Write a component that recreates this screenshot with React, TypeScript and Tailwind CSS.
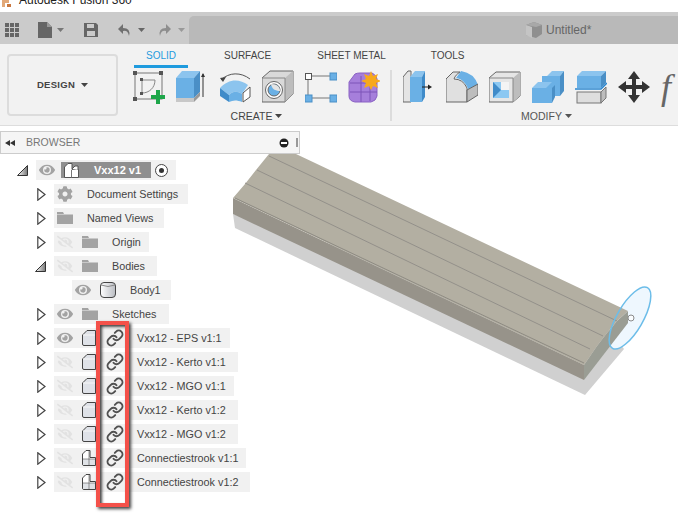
import React from 'react';
import { FaCog, FaEye, FaEyeSlash } from 'react-icons/fa';
import { Link } from 'lucide-react';

const Caret = ({ className = '' }: { className?: string }) => (
  <svg width="7" height="4" viewBox="0 0 7 4" className={className}>
    <path d="M0 0h7L3.5 4z" fill="currentColor" />
  </svg>
);

const Box = ({ children, w = 32 }: { children: React.ReactNode; w?: number }) => (
  <svg width={w} height="34" viewBox={`0 0 ${w} 34`} className="flex-none">
    {children}
  </svg>
);

const SketchIcon = () => (
  <Box>
    <rect x="2" y="3" width="27" height="26" fill="none" stroke="#777" />
    <rect x="0" y="1" width="4" height="4" fill="#555" />
    <rect x="26" y="1" width="4" height="4" fill="#555" />
    <rect x="0" y="27" width="4" height="4" fill="#555" />
    <path d="M9 10v13M9 23c7 0 13-5 13-13M9 10h13" fill="none" stroke="#888" />
    <rect x="7" y="8" width="3" height="3" fill="#555" />
    <rect x="7" y="22" width="3" height="3" fill="#555" />
    <path d="M23 20h4v5h5v4h-5v5h-4v-5h-5v-4h5z" fill="#1ea64a" />
  </Box>
);

const ExtrudeIcon = () => (
  <Box>
    <path d="M0 8l6-7h18l-6 7z" fill="#8cc4ee" />
    <rect x="0" y="8" width="18" height="20" fill="#6ab0e5" />
    <path d="M18 8l6-7v21l-6 6z" fill="#4a8fc6" />
    <path d="M0 28h18v4H0z" fill="#c8c8c8" />
    <path d="M18 28l6-6v4l-6 6z" fill="#999" />
    <path d="M27 4v23" stroke="#333" />
    <path d="M25 7l2-4 2 4z" fill="#333" />
  </Box>
);

const RevolveIcon = () => (
  <Box>
    <path d="M2 10C10 2 22 2 31 9" fill="none" stroke="#555" />
    <path d="M1 8l6-1-3 5z" fill="#444" />
    <path d="M1 18c8-9 19-10 28-3l-6 9c-5-3-9-3-13 1z" fill="#8cc4ee" />
    <path d="M1 18l9 7v7l-9-6z" fill="#3f8bc9" />
    <path d="M10 25c4-4 8-4 13-1v8c-5-2-9-2-13 0z" fill="#6ab0e5" />
    <path d="M24 23l7-6v10l-7 5z" fill="#fff" stroke="#555" />
  </Box>
);

const HoleIcon = () => (
  <Box>
    <path d="M0 8l8-7h23v23l-8 8H0z" fill="#d9d9d9" stroke="#666" />
    <path d="M23 8l8-7v23l-8 8z" fill="#bdbdbd" />
    <path d="M0 8h23v24" fill="none" stroke="#888" />
    <circle cx="12" cy="20" r="8.5" fill="#fff" stroke="#666" />
    <circle cx="12" cy="20" r="6" fill="#6ab0e5" stroke="#666" />
    <path d="M9 14c1 5 4 7 9 7 0-4-3-7-9-7z" fill="#e4e4e4" />
  </Box>
);

const ConstraintIcon = () => (
  <Box>
    <path d="M5 6h20M3 9v16M6 28h20" stroke="#777" />
    <rect x="0.5" y="3.5" width="6" height="6" fill="#fff" stroke="#555" />
    <rect x="25" y="3" width="7" height="7" fill="#6ab0e5" stroke="#4a8fc6" />
    <rect x="0" y="25" width="7" height="7" fill="#6ab0e5" stroke="#4a8fc6" />
    <rect x="25" y="25" width="7" height="7" fill="#6ab0e5" stroke="#4a8fc6" />
  </Box>
);

const FormIcon = () => (
  <Box>
    <path d="M1 12l6-8q2-1 5-1h12q6 3 5 9v14q-1 5-6 6H7q-6-1-6-6z" fill="#a67fdb" stroke="#8a62c4" />
    <path d="M2 13h27M2 22h27M13 6v26M22 5v26" stroke="#7c55b8" fill="none" />
    <path d="M23 1l2 5 5-2-2 5 5 2-5 2 2 5-5-2-2 4-2-4-5 2 2-5-5-2 5-2-2-5 5 2z" fill="#f7a81b" />
  </Box>
);

const PressPullIcon = () => (
  <Box>
    <path d="M0 7l5-6h3v31H0z" fill="#e4e4e4" stroke="#666" />
    <path d="M7 7l5-6h10l-3 6z" fill="#8cc4ee" />
    <rect x="7" y="7" width="12" height="25" fill="#6ab0e5" />
    <path d="M19 7l3-6v26l-3 5z" fill="#3f8bc9" />
    <path d="M19 17h8" stroke="#222" />
    <path d="M25 14.500l4 2.500-4 2.500z" fill="#222" />
  </Box>
);

const FilletIcon = () => (
  <Box>
    <path d="M0 9l7-7h7c-3 2-5 4-6 7q9 0 13 9v14H0z" fill="#e0e0e0" stroke="#666" />
    <path d="M10 8l5-7q13 2 17 14l-10 4c-2-6-6-10-12-11z" fill="#6ab0e5" />
    <path d="M21 20l11-6v11l-11 7z" fill="#bdbdbd" stroke="#666" />
  </Box>
);

const ShellIcon = () => (
  <Box>
    <path d="M0 8l7-6h24v24l-7 6H0z" fill="#e6e6e6" stroke="#666" />
    <path d="M24 8l7-6v24l-7 6z" fill="#bdbdbd" />
    <path d="M0 8h24v24" fill="none" stroke="#888" />
    <rect x="4" y="12" width="16" height="16" fill="#8cc8f2" />
    <path d="M4 12h8v8h8v-8M4 12v16l8-8" fill="#3f8bc9" />
    <path d="M12 12h8v8h-8z" fill="#f4f4f4" />
  </Box>
);

const CombineIcon = () => (
  <Box>
    <path d="M10 12l5-5V6l5-5h12l-4 5H15" fill="#8cc4ee" />
    <rect x="10" y="6" width="18" height="20" fill="#6ab0e5" />
    <path d="M28 6l4-5v20l-4 5z" fill="#4a8fc6" />
    <path d="M0 18l6-6h14l-6 6z" fill="#8cc4ee" />
    <rect x="0" y="18" width="20" height="15" fill="#6ab0e5" />
    <path d="M20 18l3-3v12l-3 6z" fill="#4a8fc6" />
  </Box>
);

const SplitIcon = () => (
  <Box>
    <path d="M2 6l5-5h24l-5 5z" fill="#8cc4ee" />
    <rect x="2" y="6" width="24" height="12" fill="#6ab0e5" />
    <path d="M26 6l5-5v12l-5 5z" fill="#4a8fc6" />
    <path d="M0 19h26l6-6" fill="none" stroke="#2a86cf" strokeWidth="1.500" />
    <rect x="2" y="22" width="24" height="11" fill="#dedede" stroke="#777" />
    <path d="M26 22l5-5v11l-5 5z" fill="#bdbdbd" stroke="#777" />
  </Box>
);

const MoveIcon = () => (
  <Box>
    <path d="M16 1l6 8h-4v6h6v-4l8 6-8 6v-4h-6v6h4l-6 8-6-8h4v-6H8v4l-8-6 8-6v4h6V9h-4z" fill="#333" />
  </Box>
);

const CubeOutline = () => (
  <svg width="16" height="16" viewBox="0 0 16 16">
    <path d="M0 3l8-3 8 3v9l-6 4-10-3z" fill="#8f8f8f" />
    <path d="M0 3l8-3 8 3-6 2z" fill="#a8a8a8" />
    <path d="M0 3l6 2v11L0 13z" fill="#c4c4c4" />
  </svg>
);

const GridIcon = () => (
  <svg width="14" height="14" viewBox="0 0 14 14" className="ml-[5px] flex-none">
    <path
      d="M0 0h4v4H0zM5 0h4v4H5zM10 0h4v4h-4zM0 5h4v4H0zM5 5h4v4H5zM10 5h4v4h-4zM0 10h4v4H0zM5 10h4v4H5zM10 10h4v4h-4z"
      fill="#666"
    />
  </svg>
);

const FolderIcon = () => (
  <svg width="16" height="12" viewBox="0 0 16 12" className="flex-none">
    <path d="M0 0h6l1 2h9v10H0z" fill="#a3a3a3" />
    <path d="M0 2.500h16" stroke="#c9c9c9" />
  </svg>
);

const TreeArrow = ({ open = false }: { open?: boolean }) =>
  open ? (
    <svg width="11" height="11" viewBox="0 0 11 11" className="flex-none">
      <defs>
        <linearGradient id="openArrow" x1="0" y1="0" x2="1" y2="0">
          <stop offset="0" stopColor="#fff" />
          <stop offset="1" stopColor="#777" />
        </linearGradient>
      </defs>
      <path d="M0.500 10.500L10.500 0.500V10.500z" fill="url(#openArrow)" stroke="#333" />
    </svg>
  ) : (
    <svg width="9" height="13" viewBox="0 0 9 13" className="flex-none">
      <path d="M0.800 0.800L8 6.500 0.800 12.200z" fill="#fff" stroke="#444" strokeWidth="1.200" />
    </svg>
  );

const PartIcon = () => (
  <svg width="14" height="16" viewBox="0 0 14 16" className="flex-none">
    <path d="M0.500 5L5 0.500h8.500v15H2a1.500 1.500 0 0 1-1.500-1.500z" fill="#dfe2e8" stroke="#444" />
    <path d="M1 5h12" stroke="#f7f7f7" />
  </svg>
);

const AssemblyIcon = () => (
  <svg width="14" height="16" viewBox="0 0 14 16" className="flex-none">
    <path d="M0.500 4L4 0.500h4v7h5.500v8H2a1.500 1.500 0 0 1-1.500-1.500z" fill="#fff" stroke="#444" />
    <path d="M1 9h6v6H1zM7 9h6v6H7z" fill="#dfe2e6" />
    <path d="M7 1v14M1 9h12" stroke="#555" strokeWidth="0.600" />
  </svg>
);

const CylinderIcon = () => (
  <svg width="16" height="16" viewBox="0 0 16 16" className="flex-none">
    <defs>
      <linearGradient id="cyl" x1="0" y1="0" x2="1" y2="0">
        <stop offset="0" stopColor="#fff" />
        <stop offset="1" stopColor="#b9bcc2" />
      </linearGradient>
    </defs>
    <rect x="0.500" y="0.500" width="15" height="15" rx="3.500" fill="url(#cyl)" stroke="#444" />
    <path d="M1 3q7 3 14 0" fill="none" stroke="#888" />
  </svg>
);

type Row = { label: string; w: number; kind: 'part' | 'assembly'; visible?: boolean };

const links: Row[] = [
  { label: 'Vxx12 - EPS v1:1', w: 176, kind: 'part', visible: true },
  { label: 'Vxx12 - Kerto v1:1', w: 184, kind: 'part' },
  { label: 'Vxx12 - MGO v1:1', w: 180, kind: 'part' },
  { label: 'Vxx12 - Kerto v1:2', w: 184, kind: 'part' },
  { label: 'Vxx12 - MGO v1:2', w: 184, kind: 'part' },
  { label: 'Connectiestrook v1:1', w: 192, kind: 'assembly' },
  { label: 'Connectiestrook v1:2', w: 196, kind: 'assembly' },
];

const Eye = ({ visible }: { visible?: boolean }) =>
  visible ? (
    <FaEye className="text-[#a3a3a3] flex-none" size={16} />
  ) : (
    <FaEyeSlash className="text-[#e2e2e2] flex-none" size={16} />
  );

const FolderRow = ({ label, w, visible, open }: { label: string; w: number; visible?: boolean; open?: boolean }) => (
  <div className="flex items-center h-5">
    <div className="w-[54px] flex justify-end pr-[8px] flex-none">
      <TreeArrow open={open} />
    </div>
    <div className="flex items-center h-5 bg-[#f1f1f1]" style={{ width: w }}>
      <div className="ml-[3px] w-[16px]">
        <Eye visible={visible} />
      </div>
      <div className="ml-[9px]">
        <FolderIcon />
      </div>
      <span className="ml-[14px] mt-[1px]">{label}</span>
    </div>
  </div>
);

const ModelView = () => (
  <svg width="678" height="402" viewBox="0 125 678 402" className="absolute left-0 top-[126px]">
    {/* ground shadow */}
    <path d="M233 213L235 227 585 394 624 348 610 330z" fill="#d0d0d0" />
    {/* sketch plane, back half */}
    <ellipse cx="630" cy="317" rx="13" ry="35" transform="rotate(30 630 317)" fill="#eef7fe" />
    {/* front side */}
    <path d="M233 197V213L584 379V364z" fill="#97938a" />
    {/* end face */}
    <path d="M584 364V379L628 322V310L617 320 607 332 597 345z" fill="#9a9d94" />
    {/* top face, its far corner runs on under the browser header */}
    <path d="M233 197L245 183 256 169 269 153 296 153 628 310 617 320 607 332 597 345 584 364z" fill="#b3afa2" />
    <path d="M269 155L617 320M257 169L603 335M245 182L590 348" stroke="#93908a" strokeWidth="1" />
    <path d="M235 197L584 362" stroke="#8e8b83" strokeWidth="1" />
    <ellipse cx="630" cy="317" rx="13" ry="35" transform="rotate(30 630 317)" fill="none" stroke="#6cbde9" strokeWidth="1.500" />
    <circle cx="631" cy="317" r="3" fill="#fff" fillOpacity="0.7" stroke="#8a8a8a" />
  </svg>
);

export default function App() {
  return (
    <div className="relative w-[678px] h-[527px] overflow-hidden bg-white text-[#444] font-['Liberation_Sans',Arial,sans-serif] text-[10.800px]">
      {/* title bar */}
      <div className="h-3 flex items-start overflow-hidden">
        <svg width="10" height="7" viewBox="0 0 10 7" className="ml-[2px]">
          <path d="M0 0h7v3H3v4H0z" fill="#e2a878" />
          <path d="M5 4h4v3H5z" fill="#c9773f" />
        </svg>
        <span className="ml-[7px] -mt-[6px] text-[12px] leading-[12px] text-[#222] whitespace-nowrap">Autodesk Fusion 360</span>
      </div>

      {/* quick access bar */}
      <div className="h-8 bg-[#cbcbcb] flex items-end">
        <div className="h-7 w-[189px] flex items-center flex-none text-[#666]">
          <GridIcon />
          <svg width="14" height="16" viewBox="0 0 14 16" className="ml-[19px]">
            <path d="M0 0h9l5 5v11H0z" fill="#666" />
            <path d="M9 0v5h5" fill="#999" />
          </svg>
          <Caret className="ml-[5px] text-[#777]" />
          <svg width="14" height="14" viewBox="0 0 14 14" className="ml-[20px]">
            <path fillRule="evenodd" d="M0 0h12l2 2v12H0zM3 1v4h7V1zM3 8v5h8V8z" fill="#666" />
          </svg>
          <svg width="14" height="14" viewBox="0 0 14 14" className="ml-[19px]">
            <path d="M6 1L1 6l5 5V8q5-1 6 5 2-8-6-8z" fill="#707070" />
          </svg>
          <Caret className="ml-[7px] text-[#666]" />
          <svg width="14" height="14" viewBox="0 0 14 14" className="ml-[13px]">
            <path d="M8 1l5 5-5 5V8Q3 7 2 13 0 5 8 5z" fill="#8e8e8e" />
          </svg>
          <Caret className="ml-[6px] text-[#999]" />
        </div>
        <div className="flex-1 h-7 bg-[#b9b9b9] rounded-tl-[5px] flex items-center pl-[337px]">
          <CubeOutline />
          <span className="ml-[4px] text-[12px] text-[#666]">Untitled*</span>
        </div>
      </div>

      {/* ribbon */}
      <div className="h-[82px] bg-[#f2f2f2] border-b border-[#dddddd] flex">
        <div className="ml-[7px] mt-[10px] w-[111px] h-[62px] flex-none rounded-[4px] border-2 border-[#dcdcdc] flex items-center justify-center font-bold text-[9.500px] tracking-[0.3px] text-[#444]">
          DESIGN
          <Caret className="ml-[6px]" />
        </div>
        <div className="ml-[15px] flex-1 min-w-0">
          <div className="h-[26px] flex text-[10px] leading-[13px] whitespace-nowrap">
            <div className="ml-[1px] w-[54px] h-[24px] pt-[5px] text-center text-[#1f9bde] border-b-[3px] border-[#1f9bde]">SOLID</div>
            <span className="ml-[36px] pt-[5px]">SURFACE</span>
            <span className="ml-[46px] pt-[5px]">SHEET METAL</span>
            <span className="ml-[45px] pt-[5px]">TOOLS</span>
          </div>
          <div className="flex">
            <div className="w-[247px] flex-none">
              <div className="flex gap-[11px]">
                <SketchIcon />
                <ExtrudeIcon />
                <RevolveIcon />
                <HoleIcon />
                <ConstraintIcon />
                <FormIcon />
              </div>
              <div className="mt-[6px] flex items-center justify-center text-[10.500px] leading-3">
                CREATE
                <Caret className="ml-[3px]" />
              </div>
            </div>
            <div className="ml-[10px] h-[51px] w-[2px] bg-[#dcdcdc] flex-none" />
            <div className="ml-[11px] w-[275px] flex-none">
              <div className="flex gap-[11px] w-[320px]">
                <PressPullIcon />
                <FilletIcon />
                <ShellIcon />
                <CombineIcon />
                <SplitIcon />
                <MoveIcon />
              </div>
              <div className="mt-[6px] pl-[12px] flex items-center justify-center text-[10.500px] leading-3 text-[#555]">
                MODIFY
                <Caret className="ml-[3px]" />
              </div>
            </div>
          </div>
        </div>
      </div>

      {/* function glyph at the ribbon's right edge */}
      <span className="absolute left-[661px] top-[68px] font-['Liberation_Serif',serif] italic text-[36px] leading-[38px] text-[#666]">f</span>

      <ModelView />

      {/* browser panel */}
      <div className="relative">
        <div className="mt-[5px] w-[300px] h-[23px] bg-[#f5f5f5] border border-[#cccccc] flex items-center text-[#777] text-[10.500px]">
          <svg width="10" height="6" viewBox="0 0 10 6" className="ml-[4px]">
            <path d="M5 0v6L0 3zM10 0v6L5 3z" fill="#333" />
          </svg>
          <span className="ml-[11px] w-[53px]">BROWSER</span>
          <svg width="10" height="10" viewBox="0 0 10 10" className="ml-[200px]">
            <circle cx="5" cy="5" r="4.500" fill="#222" />
            <rect x="2" y="4" width="6" height="2" fill="#fff" />
          </svg>
          <div className="ml-[7px] w-[2px] h-[9px] border-x border-[#999]" />
        </div>

        <div className="mt-[6px] flex flex-col gap-1 whitespace-nowrap">
          {/* root */}
          <div className="flex items-center h-5">
            <div className="ml-[17px] w-[19px] flex-none">
              <TreeArrow open />
            </div>
            <div className="w-[140px] h-5 bg-[#f1f1f1] flex items-center">
              <div className="ml-[3px]">
                <Eye visible />
              </div>
              <div className="ml-[6px] w-[90px] h-4 bg-[#8f8f8f] flex items-center">
                <div className="ml-[3px]">
                  <svg width="15" height="15" viewBox="0 0 15 15">
                    <path d="M0.500 4L4 0.500h4v6h6.500v8h-14z" fill="#fff" stroke="#555" />
                    <path d="M8 6l3-3h3v4" fill="#fff" stroke="#555" />
                    <path d="M7.500 7v7.500" stroke="#777" />
                  </svg>
                </div>
                <span className="ml-[15px] font-bold text-white text-[11px]">Vxx12 v1</span>
              </div>
              <svg width="13" height="13" viewBox="0 0 13 13" className="ml-[4px]">
                <circle cx="6.500" cy="6.500" r="6" fill="#fff" stroke="#444" />
                <circle cx="6.500" cy="6.500" r="2.500" fill="#333" />
              </svg>
            </div>
          </div>

          {/* document settings */}
          <div className="flex items-center h-5">
            <div className="w-[54px] flex justify-end pr-[8px] flex-none">
              <TreeArrow />
            </div>
            <div className="w-[134px] h-5 bg-[#f1f1f1] flex items-center">
              <FaCog className="ml-[3px] text-[#a3a3a3] flex-none" size={16} />
              <span className="ml-[14px] mt-[1px]">Document Settings</span>
            </div>
          </div>

          {/* named views */}
          <div className="flex items-center h-5">
            <div className="w-[54px] flex justify-end pr-[8px] flex-none">
              <TreeArrow />
            </div>
            <div className="w-[110px] h-5 bg-[#f1f1f1] flex items-center">
              <div className="ml-[3px]">
                <FolderIcon />
              </div>
              <span className="ml-[14px] mt-[1px]">Named Views</span>
            </div>
          </div>

          <FolderRow label="Origin" w={95} />
          <FolderRow label="Bodies" w={103} open />

          {/* body */}
          <div className="flex items-center h-5 ml-[72px]">
            <div className="w-[99px] h-5 bg-[#f1f1f1] flex items-center">
              <div className="ml-[3px]">
                <Eye visible />
              </div>
              <div className="ml-[9px]">
                <CylinderIcon />
              </div>
              <span className="ml-[14px] mt-[1px]">Body1</span>
            </div>
          </div>

          <FolderRow label="Sketches" w={115} visible />

          {links.map((row) => (
            <div key={row.label} className="flex items-center h-5">
              <div className="w-[54px] flex justify-end pr-[8px] flex-none">
                <TreeArrow />
              </div>
              <div className="h-5 bg-[#f1f1f1] flex items-center" style={{ width: row.w }}>
                <div className="ml-[3px] w-[16px]">
                  <Eye visible={row.visible} />
                </div>
                <div className="ml-[9px]">{row.kind === 'part' ? <PartIcon /> : <AssemblyIcon />}</div>
                <Link className="ml-[10px] text-[#505050] flex-none" size={18} strokeWidth={2.6} />
                <span className="ml-[13px] mt-[1px]">{row.label}</span>
              </div>
            </div>
          ))}
        </div>

        {/* red annotation */}
        <div className="absolute left-[96px] top-[190px] w-[33px] h-[186px] border-4 border-[#f4514a] shadow-[2px_2px_3px_#444,inset_2px_2px_3px_#444]" />
      </div>
    </div>
  );
}
